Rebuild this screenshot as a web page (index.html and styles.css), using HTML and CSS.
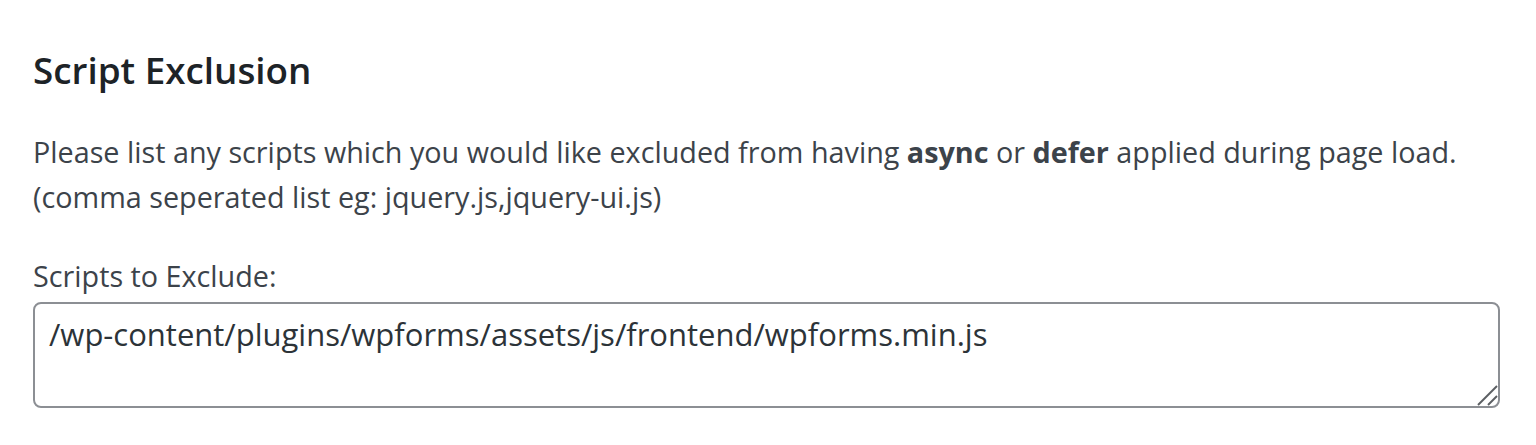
FILE: index.html
```html
<!DOCTYPE html>
<html lang="en">
<head>
  <meta charset="UTF-8" />
  <title>Script Exclusion</title>
  <link rel="stylesheet" href="styles.css">
</head>
<body>
  <div class="section">
    <h2>Script Exclusion</h2>
    <p class="desc">Please list any scripts which you would like excluded from having <strong>async</strong> or <strong>defer</strong> applied during page load.<br>(comma seperated list eg: jquery.js,jquery-ui.js)</p>

    <label for="excludeScripts">Scripts to Exclude:</label>
    <div class="field">
      <textarea id="excludeScripts" rows="2">/wp-content/plugins/wpforms/assets/js/frontend/wpforms.min.js</textarea>
      <svg class="grip" width="22" height="22" viewBox="0 0 22 22">
        <line x1="2" y1="21" x2="21" y2="2" />
        <line x1="12" y1="21" x2="21" y2="12" />
      </svg>
    </div>
  </div>
</body>
</html>
```

FILE: styles.css
```css
body {
  margin: 0;
  background: #fff;
  font-family: 'Open Sans', 'Noto Sans', sans-serif;
  color: #3c434a;
}

.section {
  padding: 45px 36px 0 33px;
}

h2 {
  margin: 0;
  font-size: 36.8px;
  font-weight: 600;
  color: #1d2327;
  line-height: 50px;
}

.desc {
  margin: 34px 0 0;
  font-size: 28.75px;
  line-height: 45px;
  white-space: nowrap;
}

.desc strong {
  font-weight: 700;
}

label {
  display: block;
  margin-top: 37px;
  font-size: 28.75px;
  line-height: 40px;
}

.field {
  position: relative;
  margin-top: 6px;
}

textarea {
  display: block;
  width: 100%;
  box-sizing: border-box;
  height: 106px;
  padding: 9px 14px;
  border: 2px solid #8c8f94;
  border-radius: 8px;
  font-family: inherit;
  font-size: 31px;
  line-height: 42px;
  color: #2c3338;
  resize: none;
  outline: none;
}

.grip {
  position: absolute;
  right: 2px;
  bottom: 2px;
}

.grip line {
  stroke: #5c5f63;
  stroke-width: 2;
}
```
